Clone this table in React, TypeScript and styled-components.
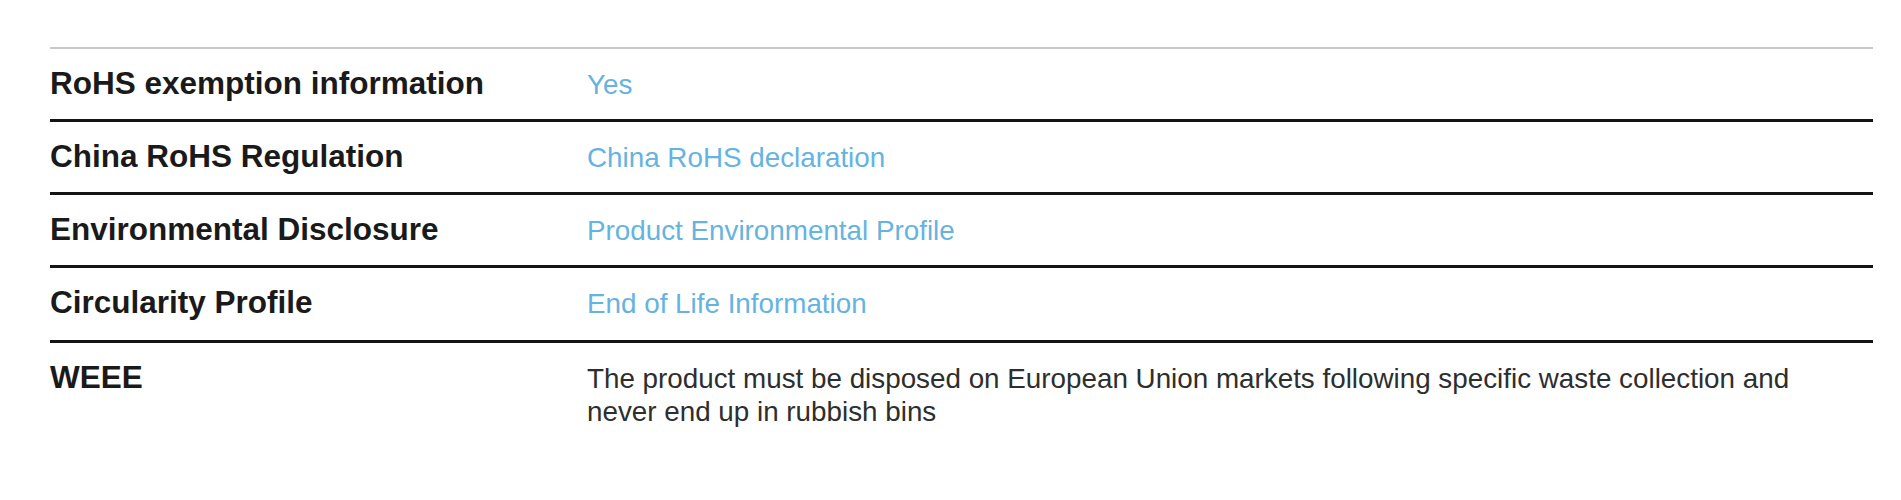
import React from "react";
import styled, { createGlobalStyle } from "styled-components";

const GlobalStyle = createGlobalStyle`
  html, body {
    margin: 0;
    padding: 0;
    background: #ffffff;
  }
  body {
    font-family: "Liberation Sans", Arial, sans-serif;
  }
`;

const Page = styled.div`
  padding: 47px 28px 0 50px;
  width: 1823px;
`;

const SpecTable = styled.div`
  border-top: 2px solid #c9c9c9;
`;

const SpecRow = styled.div<{ $last?: boolean; $tall?: boolean }>`
  display: grid;
  grid-template-columns: 537px 1fr;
  align-items: baseline;
  padding: 16px 0 ${(props) => (props.$last ? "0" : props.$tall ? "20px" : "18px")};
  border-bottom: ${(props) => (props.$last ? "none" : "3px solid #141414")};
`;

const Label = styled.div`
  font-size: 31.5px;
  line-height: 36px;
  font-weight: 700;
  color: #1a1a1a;
`;

const LinkValue = styled.a`
  font-size: 27.8px;
  line-height: 33px;
  color: #66b3e0;
  text-decoration: none;
`;

const TextValue = styled.div`
  font-size: 27.8px;
  line-height: 33px;
  color: #2e2e2e;
  max-width: 1240px;
`;

const rows = [
  { label: "RoHS exemption information", link: "Yes" },
  { label: "China RoHS Regulation", link: "China RoHS declaration" },
  { label: "Environmental Disclosure", link: "Product Environmental Profile" },
  { label: "Circularity Profile", link: "End of Life Information", tall: true },
];

export default function App() {
  return (
    <>
      <GlobalStyle />
      <Page>
        <SpecTable>
          {rows.map((row) => (
            <SpecRow key={row.label} $tall={row.tall}>
              <Label>{row.label}</Label>
              <LinkValue href="#">{row.link}</LinkValue>
            </SpecRow>
          ))}
          <SpecRow $last>
            <Label>WEEE</Label>
            <TextValue>
              The product must be disposed on European Union markets following
              specific waste collection and never end up in rubbish bins
            </TextValue>
          </SpecRow>
        </SpecTable>
      </Page>
    </>
  );
}
